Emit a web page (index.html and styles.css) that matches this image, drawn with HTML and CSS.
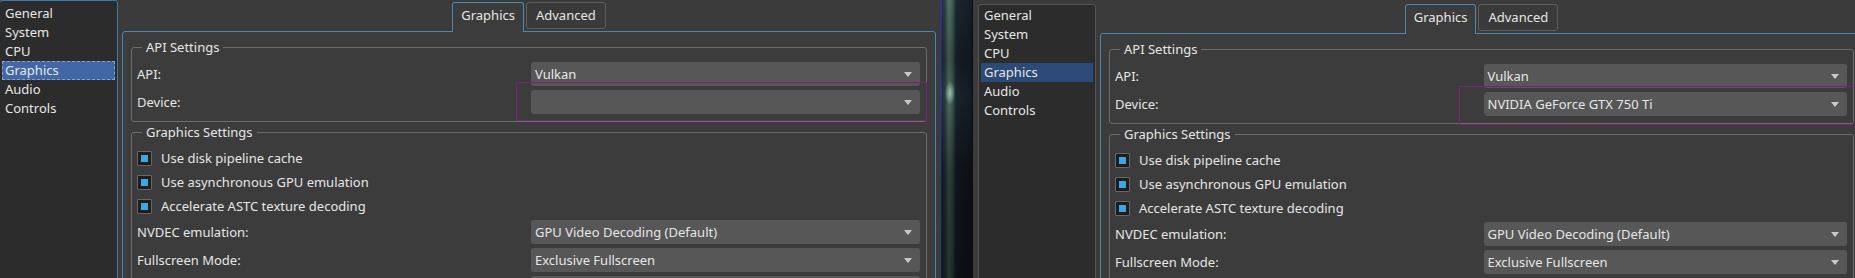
FILE: index.html
```html
<!DOCTYPE html>
<html>
<head>
<meta charset="utf-8">
<link rel="stylesheet" href="styles.css">
</head>
<body>
<div class="screen">
  <div class="win win-a">
    <ul class="nav nav-focus">
      <li>General</li>
      <li>System</li>
      <li>CPU</li>
      <li class="sel">Graphics</li>
      <li>Audio</li>
      <li>Controls</li>
    </ul>
    <div class="tabw">
      <div class="tabbar">
        <div class="tab tab-on">Graphics</div>
        <div class="tab">Advanced</div>
      </div>
      <div class="pane">
        <fieldset class="grp grp-api">
          <legend>API Settings</legend>
          <div class="form">
            <span class="lbl">API:</span>
            <div class="combo"><span>Vulkan</span><svg class="arr" width="8" height="5" viewBox="0 0 8 5"><polygon points="0,0 8,0 4,5"/></svg></div>
            <span class="lbl">Device:</span>
            <div class="combo"><span></span><svg class="arr" width="8" height="5" viewBox="0 0 8 5"><polygon points="0,0 8,0 4,5"/></svg></div>
          </div>
        </fieldset>
        <fieldset class="grp grp-gfx">
          <legend>Graphics Settings</legend>
          <div class="form">
            <div class="check"><span class="box"></span><span>Use disk pipeline cache</span></div>
            <div class="check"><span class="box"></span><span>Use asynchronous GPU emulation</span></div>
            <div class="check"><span class="box"></span><span>Accelerate ASTC texture decoding</span></div>
            <span class="lbl">NVDEC emulation:</span>
            <div class="combo"><span>GPU Video Decoding (Default)</span><svg class="arr" width="8" height="5" viewBox="0 0 8 5"><polygon points="0,0 8,0 4,5"/></svg></div>
            <span class="lbl">Fullscreen Mode:</span>
            <div class="combo"><span>Exclusive Fullscreen</span><svg class="arr" width="8" height="5" viewBox="0 0 8 5"><polygon points="0,0 8,0 4,5"/></svg></div>
            <span class="lbl"></span>
            <div class="combo"></div>
          </div>
        </fieldset>
        <div class="mark mark-a"></div>
      </div>
    </div>
  </div>

  <div class="desk"></div>

  <div class="win win-b">
    <ul class="nav">
      <li>General</li>
      <li>System</li>
      <li>CPU</li>
      <li class="sel">Graphics</li>
      <li>Audio</li>
      <li>Controls</li>
    </ul>
    <div class="tabw">
      <div class="tabbar">
        <div class="tab tab-on">Graphics</div>
        <div class="tab">Advanced</div>
      </div>
      <div class="pane">
        <fieldset class="grp grp-api">
          <legend>API Settings</legend>
          <div class="form">
            <span class="lbl">API:</span>
            <div class="combo"><span>Vulkan</span><svg class="arr" width="8" height="5" viewBox="0 0 8 5"><polygon points="0,0 8,0 4,5"/></svg></div>
            <span class="lbl">Device:</span>
            <div class="combo"><span>NVIDIA GeForce GTX 750 Ti</span><svg class="arr" width="8" height="5" viewBox="0 0 8 5"><polygon points="0,0 8,0 4,5"/></svg></div>
          </div>
        </fieldset>
        <fieldset class="grp grp-gfx">
          <legend>Graphics Settings</legend>
          <div class="form">
            <div class="check"><span class="box"></span><span>Use disk pipeline cache</span></div>
            <div class="check"><span class="box"></span><span>Use asynchronous GPU emulation</span></div>
            <div class="check"><span class="box"></span><span>Accelerate ASTC texture decoding</span></div>
            <span class="lbl">NVDEC emulation:</span>
            <div class="combo"><span>GPU Video Decoding (Default)</span><svg class="arr" width="8" height="5" viewBox="0 0 8 5"><polygon points="0,0 8,0 4,5"/></svg></div>
            <span class="lbl">Fullscreen Mode:</span>
            <div class="combo"><span>Exclusive Fullscreen</span><svg class="arr" width="8" height="5" viewBox="0 0 8 5"><polygon points="0,0 8,0 4,5"/></svg></div>
            <span class="lbl"></span>
            <div class="combo"></div>
          </div>
        </fieldset>
        <div class="mark mark-b"></div>
      </div>
    </div>
  </div>
</div>
</body>
</html>
```

FILE: styles.css
```css
* { box-sizing: border-box; }

html, body {
  margin: 0;
  padding: 0;
  width: 1855px;
  height: 278px;
  overflow: hidden;
  background: #3b3b3b;
}

body {
  font-family: "Noto Sans", "DejaVu Sans", sans-serif;
  font-size: 13px;
  color: #e6e6e6;
}

.screen {
  display: flex;
  width: 1855px;
  height: 278px;
  overflow: hidden;
}

.win {
  display: flex;
  align-items: flex-start;
  flex: none;
  height: 278px;
  background: #3b3b3b;
}

.win-a { width: 941px; }

.win-b {
  width: 891px;
  border-left: 1px solid #0d0d0d;
  padding-left: 5px;
}

/* sidebar list */
.nav {
  list-style: none;
  margin: 0;
  flex: none;
  width: 118px;
  height: 300px;
  background: #2c2c2c;
  border: 1px solid #555555;
  border-radius: 3px;
  padding: 1px 2px 0 2px;
  margin-top: 4px;
}

.nav-focus {
  width: 119px;
  margin-left: -1px;
  margin-top: 0;
  padding-top: 3px;
  border-color: #3f79a6;
}

.nav li {
  height: 19px;
  line-height: 19px;
  padding-left: 3px;
  white-space: nowrap;
}

.nav li.sel {
  background: #2b4a78;
}

.nav-focus li.sel {
  background: #4167a6;
  outline: 1px dashed rgba(190, 210, 240, 0.55);
  outline-offset: -1px;
}

/* tab widget */
.tabw {
  flex: none;
  margin-left: 4px;
  display: flex;
  flex-direction: column;
}

.win-a .tabw { width: 814px; }
.win-b .tabw { width: 763px; margin-top: 2px; }

.tabbar {
  position: relative;
  z-index: 1;
  height: 31px;
  padding-top: 2px;
  display: flex;
  justify-content: center;
  align-items: flex-start;
  gap: 2px;
}

.tab {
  height: 27px;
  line-height: 25px;
  padding: 0 9px;
  border: 1px solid #5e5e5e;
  border-radius: 3px;
  background: #3a3a3a;
  white-space: nowrap;
}

.tab-on {
  height: 30px;
  border-color: #4687b4;
  border-bottom: 0;
  border-radius: 3px 3px 0 0;
  background: #3c3c3c;
  padding: 0 8px;
}

.pane {
  position: relative;
  height: 260px;
  border: 1px solid #4687b4;
  border-radius: 3px;
  background: #3c3c3c;
  padding: 7px 8px;
}

/* group boxes */
.grp {
  margin: 0;
  min-width: 0;
  border: 1px solid #6c6c6c;
  border-radius: 3px;
  padding: 6px 6px 7px 5px;
}

.grp legend {
  margin-left: 5px;
  padding: 0 4px;
  height: 17px;
  line-height: 17px;
}

.grp-gfx {
  margin-top: 2px;
  padding-top: 7px;
}

.form {
  display: grid;
  grid-template-columns: 1fr 1fr;
  column-gap: 5px;
  row-gap: 4px;
}

.lbl {
  align-self: center;
  white-space: nowrap;
}

.combo {
  height: 24px;
  background: #575757;
  border-radius: 3px;
  padding: 0 8px 0 4px;
  display: flex;
  align-items: center;
  justify-content: space-between;
  white-space: nowrap;
}

.arr { fill: #c9c9c9; flex: none; }

.check {
  grid-column: 1 / -1;
  height: 20px;
  display: flex;
  align-items: center;
  gap: 9px;
  white-space: nowrap;
}

.box {
  flex: none;
  width: 15px;
  height: 15px;
  border: 1px solid #676767;
  background: #1e1e1e;
  border-radius: 1px;
  position: relative;
}

.box::after {
  content: "";
  position: absolute;
  left: 3px;
  top: 3px;
  width: 7px;
  height: 7px;
  background: #3aa8e2;
}

/* purple annotation overlay */
.mark {
  position: absolute;
  border: 1px solid #7a227a;
  height: 39px;
}

.mark-a { left: 393px; top: 50px; width: 411px; }
.mark-b { left: 358px; top: 52px; width: 420px; }

/* desktop between the windows */
.desk {
  flex: none;
  width: 31px;
  height: 278px;
  background:
    radial-gradient(ellipse 5px 12px at 9px 93px, rgba(170, 210, 185, 0.85), rgba(170, 210, 185, 0) 100%),
    linear-gradient(to bottom, rgba(0,0,0,0) 0px, rgba(0,0,0,0.25) 60px, rgba(0,0,0,0.05) 95px, rgba(0,0,0,0.45) 170px, rgba(0,0,0,0.55) 278px),
    linear-gradient(to right,
      #2b2bd6 0px, #2b2bd6 1px,
      #22313a 1px, #2c4244 4px, #557566 8px, #3b5651 12px,
      #1b262e 15px, #151d26 30px);
}
```
